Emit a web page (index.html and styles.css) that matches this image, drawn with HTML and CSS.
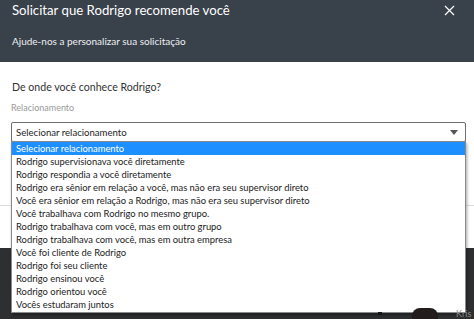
FILE: index.html
```html
<!DOCTYPE html>
<html lang="pt-BR">
<head>
    <meta charset="UTF-8">
    <title>Solicitar recomendação</title>
    <link rel="stylesheet" href="styles.css">
</head>
<body>

<div class="modal">
    <div class="header">
        <div class="title-row">
            <span class="title">Solicitar que Rodrigo recomende você</span>
            <svg class="close" width="11" height="11" viewBox="0 0 11 11">
                <path d="M1 1 L10 10 M10 1 L1 10" stroke="#fff" stroke-width="1.2" fill="none"/>
            </svg>
        </div>
        <div class="subtitle">Ajude-nos a personalizar sua solicitação</div>
    </div>
    <div class="content">
        <div class="question">De onde você conhece Rodrigo?</div>
        <div class="label">Relacionamento</div>
        <div class="select-wrap">
            <div class="select">
                <span>Selecionar relacionamento</span>
                <svg class="arrow" width="8" height="5" viewBox="0 0 8 5">
                    <path d="M0 0 L8 0 L4 5 Z" fill="#555"/>
                </svg>
            </div>
            <ul class="options">
                <li class="selected">Selecionar relacionamento</li>
                <li>Rodrigo supervisionava você diretamente</li>
                <li>Rodrigo respondia a você diretamente</li>
                <li>Rodrigo era sênior em relação a você, mas não era seu supervisor direto</li>
                <li>Você era sênior em relação a Rodrigo, mas não era seu supervisor direto</li>
                <li>Você trabalhava com Rodrigo no mesmo grupo.</li>
                <li>Rodrigo trabalhava com você, mas em outro grupo</li>
                <li>Rodrigo trabalhava com você, mas em outra empresa</li>
                <li>Você foi cliente de Rodrigo</li>
                <li>Rodrigo foi seu cliente</li>
                <li>Rodrigo ensinou você</li>
                <li>Rodrigo orientou você</li>
                <li>Vocês estudaram juntos</li>
            </ul>
        </div>
    </div>
    <div class="footer"></div>
</div>

<div class="backdrop">
    <span class="mark"></span>
    <span class="blob"></span>
    <span class="name">Kris</span>
</div>

</body>
</html>
```

FILE: styles.css
```css
body {
    margin: 0;
    width: 474px;
    height: 319px;
    overflow: hidden;
    background-color: #2e2f31;
    font-family: 'Lato', 'Noto Sans', sans-serif;
}
.modal {
    background-color: #fff;
}
.header {
    background-color: #39414b;
    height: 62px;
    padding: 0 12px;
    box-sizing: border-box;
    color: #fff;
}
.title-row {
    display: flex;
    justify-content: space-between;
    align-items: center;
    height: 20px;
}
.title {
    font-size: 13.2px;
}
.close {
    margin-right: 7px;
}
.subtitle {
    font-size: 10px;
    line-height: 16px;
    margin-top: 13px;
    color: #eef0f2;
}
.content {
    padding: 16px 8px 0 11px;
    height: 143px;
    box-sizing: border-box;
}
.question {
    font-size: 10.6px;
    line-height: 18px;
    color: #333;
    padding-left: 1px;
}
.label {
    font-size: 9px;
    line-height: 14px;
    margin-top: 5px;
    color: #9a9a9a;
}
.select-wrap {
    position: relative;
    margin-top: 7px;
}
.select {
    display: flex;
    justify-content: space-between;
    align-items: center;
    height: 20px;
    box-sizing: border-box;
    border: 1px solid #6f6f6f;
    border-radius: 2px;
    padding: 0 7px 0 4px;
    font-size: 9.6px;
    color: #1e1e1e;
}
.options {
    position: absolute;
    top: 19px;
    left: 0;
    right: 0;
    margin: 0;
    padding: 0 0 1px;
    list-style: none;
    background-color: #fff;
    border: 1px solid #8a8a8a;
    box-shadow: 1px 2px 3px rgba(0, 0, 0, 0.35);
    font-size: 9.4px;
    color: #222;
}
.options li {
    height: 13px;
    line-height: 13px;
    padding-left: 4px;
    white-space: nowrap;
}
.options .selected {
    background-color: #1e8fff;
    color: #fff;
}
.footer {
    height: 42px;
    border-top: 1px solid #dedede;
}
.backdrop {
    position: relative;
    height: 72px;
}
.mark {
    position: absolute;
    left: 378px;
    top: 64px;
    width: 4px;
    height: 3px;
    background-color: #151515;
}
.blob {
    position: absolute;
    left: 412px;
    top: 60px;
    width: 26px;
    height: 12px;
    border-radius: 8px 8px 0 0;
    background-color: #221c1d;
}
.name {
    position: absolute;
    left: 456px;
    top: 60px;
    font-size: 9px;
    color: #8a8a8a;
}
```
